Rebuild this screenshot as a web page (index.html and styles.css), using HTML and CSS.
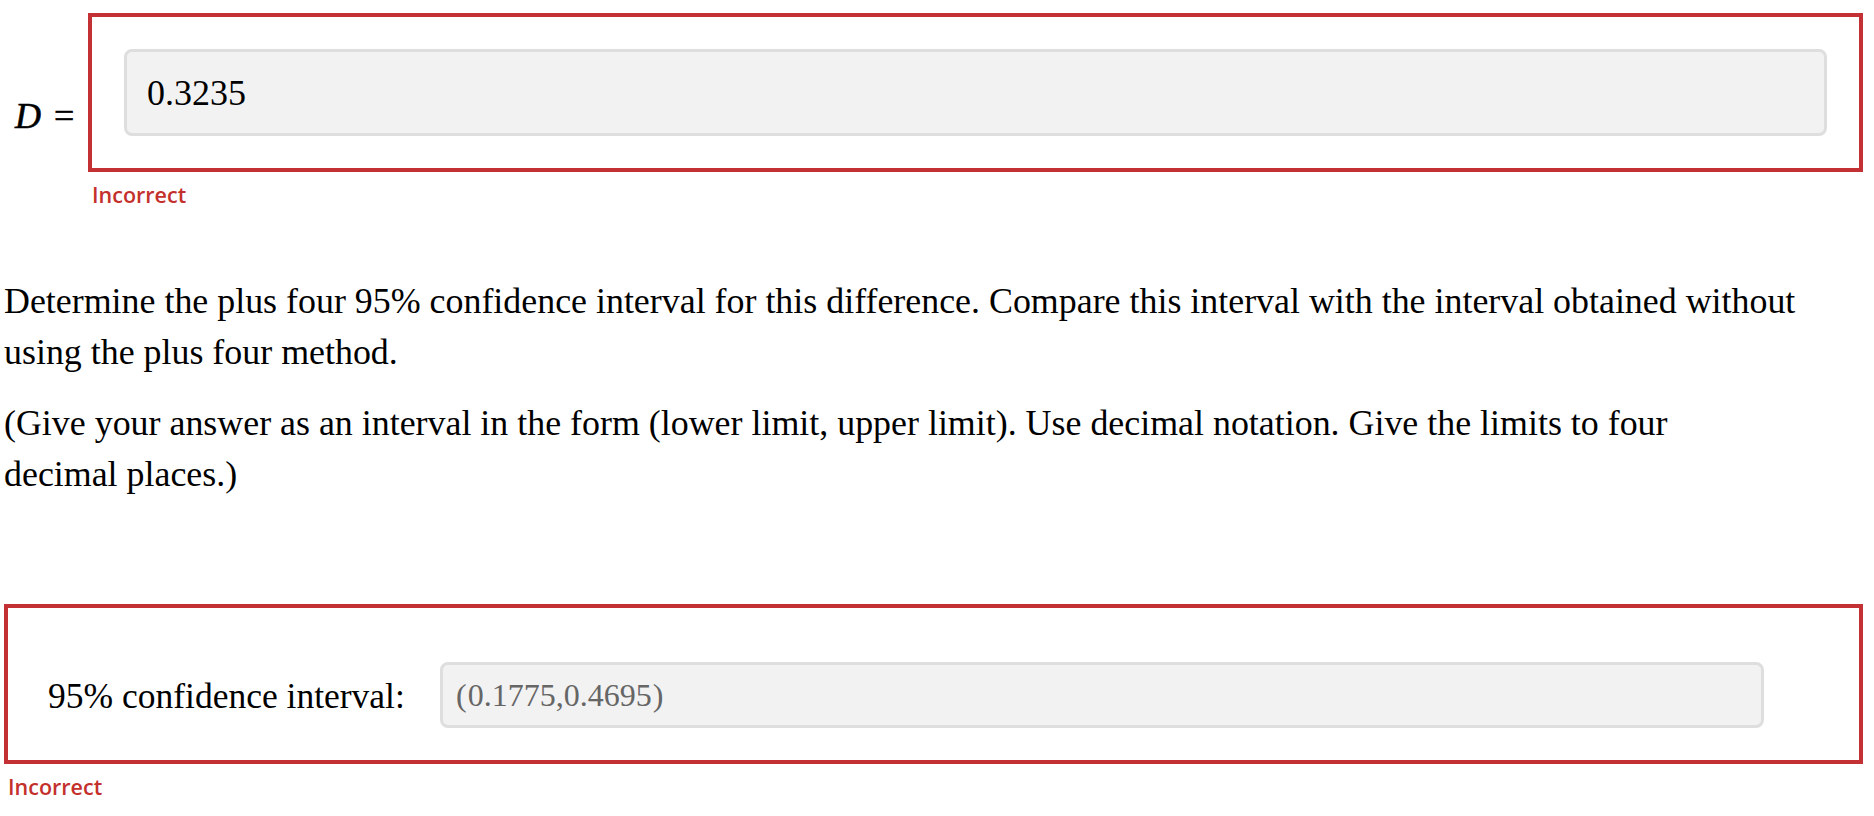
FILE: index.html
```html
<!DOCTYPE html>
<html lang="en">
<head>
    <meta charset="UTF-8">
    <meta name="viewport" content="width=device-width, initial-scale=1.0">
    <title>Plus four confidence interval</title>
    <link rel="stylesheet" href="styles.css">
</head>
<body>
    <div class="question">
        <div class="answer-row">
            <div class="math-label"><span class="math-var">D</span> =</div>
            <div class="answer-col">
                <div class="answer-box incorrect">
                    <div class="answer-field">0.3235</div>
                </div>
                <p class="feedback">Incorrect</p>
            </div>
        </div>

        <p class="prompt">Determine the plus four 95% confidence interval for this difference. Compare this interval with the interval obtained without using the plus four method.</p>
        <p class="prompt prompt-note">(Give your answer as an interval in the form (lower limit, upper limit). Use decimal notation. Give the limits to four decimal places.)</p>

        <div class="answer-box incorrect interval-box">
            <span class="field-label">95% confidence interval:</span>
            <div class="answer-field interval-field"><span class="paren">(</span>0.1775,0.4695<span class="paren">)</span></div>
        </div>
        <p class="feedback">Incorrect</p>
    </div>
</body>
</html>
```

FILE: styles.css
```css
* {
    box-sizing: border-box;
    margin: 0;
    padding: 0;
}
body {
    font-family: 'Liberation Serif', 'Times New Roman', serif;
    background-color: #FFFFFF;
    color: #000000;
}
.question {
    padding: 13px 11px 0 4px;
}
.answer-row {
    display: flex;
    align-items: flex-start;
}
.math-label {
    width: 84px;
    padding: 85px 0 0 11px;
    font-size: 36px;
    line-height: 36px;
    white-space: nowrap;
    -webkit-text-stroke: 0.6px #000000;
}
.math-var {
    font-style: italic;
    margin-right: 4px;
}
.answer-col {
    flex: 1;
}
.answer-box {
    border: 4px solid #C33134;
    padding: 32px;
}
.answer-field {
    background-color: #F2F2F2;
    border: 3px solid #DEDEDE;
    border-radius: 8px;
    height: 87px;
    padding: 0 20px;
    display: flex;
    align-items: center;
    font-size: 36px;
}
.feedback {
    font-family: 'Open Sans', sans-serif;
    font-weight: 600;
    font-size: 21.5px;
    line-height: 28px;
    color: #C4302B;
    margin-top: 9px;
    padding-left: 4px;
}
.prompt {
    font-size: 35.9px;
    line-height: 51px;
    margin-top: 67px;
}
.prompt-note {
    max-width: 1780px;
    margin-top: 20px;
}
.interval-box {
    display: flex;
    align-items: center;
    margin-top: 104px;
    padding: 54px 95px 32px 40px;
}
.field-label {
    font-size: 35.5px;
    width: 392px;
    padding-top: 2px;
}
.interval-field {
    flex: 1;
    height: 66px;
    padding: 0 12px;
    font-size: 32px;
    color: #666666;
}
.paren {
    margin: 0 1px;
}
```
